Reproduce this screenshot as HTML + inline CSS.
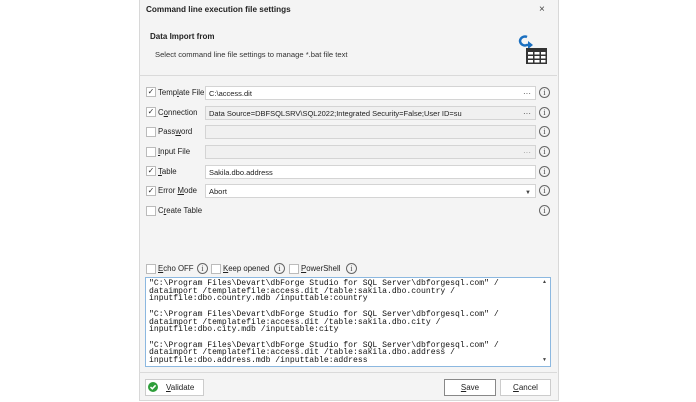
<!DOCTYPE html><html><head><style>
body{margin:0;width:696px;height:402px;background:#fff;position:relative;font-family:"Liberation Sans",sans-serif;font-size:8px;color:#222;overflow:hidden}
.a{position:absolute}
.dlg{left:139px;top:0;width:418px;height:400px;background:#f4f4f4;border:1px solid #d8d8d8;border-top:none}
.cb{position:absolute;width:8px;height:8px;border:1px solid #bbb;background:#fff;font-size:8px;line-height:8px;text-align:center;color:#333}
.lb{position:absolute;font-size:7.8px;line-height:10px}
.in{position:absolute;left:205px;width:331px;height:14px;border:1px solid #d4d4d4;background:#fff;font-size:7.5px;line-height:14px;padding-left:3px;box-sizing:border-box}
.dis{background:#f0f0f0}
.info{position:absolute;left:539px;width:9px;height:9px;border:1px solid #666;border-radius:50%;font-size:8px;line-height:9px;text-align:center;color:#444;font-family:"Liberation Serif",serif}
.dots{position:absolute;right:4px;top:0;font-size:8px;color:#444}
.ta{left:145px;top:277px;width:406px;height:90px;border:1px solid #8cb8e0;background:#fff;box-sizing:border-box;font-family:"Liberation Mono",monospace;font-size:8.1px;line-height:7.7px;padding:2px 0 0 3px;white-space:pre;color:#111}
.btn{position:absolute;height:17px;border:1px solid #ccc;background:#fff;box-sizing:border-box;font-size:8px;line-height:15px;text-align:center}
u{text-decoration:underline}
</style></head><body>
<div class="a dlg"></div>
<div class="a" style="left:146px;top:5px;font-weight:bold;font-size:8.2px">Command line execution file settings</div>
<div class="a" style="left:539px;top:4px;font-size:10px;color:#444">×</div>
<div class="a" style="left:150px;top:32px;font-weight:bold;font-size:8px">Data Import from</div>
<div class="a" style="left:155px;top:50px;font-size:7.6px;color:#333">Select command line file settings to manage *.bat file text</div>
<svg class="a" style="left:515px;top:34px" width="34" height="32" viewBox="0 0 34 32">
<path d="M12 3 A5 5 0 0 0 5 7 A5 5 0 0 0 12 11 L15 11" fill="none" stroke="#1a6fc0" stroke-width="2.5"/>
<path d="M13 7 L18 11 L13 15Z" fill="#1a6fc0"/>
<rect x="11" y="14" width="21" height="16" fill="#333"/>
<g fill="#fff"><rect x="13" y="18" width="5" height="2.5"/><rect x="19.5" y="18" width="5" height="2.5"/><rect x="26" y="18" width="4.5" height="2.5"/>
<rect x="13" y="22" width="5" height="2.5"/><rect x="19.5" y="22" width="5" height="2.5"/><rect x="26" y="22" width="4.5" height="2.5"/>
<rect x="13" y="26" width="5" height="2.5"/><rect x="19.5" y="26" width="5" height="2.5"/><rect x="26" y="26" width="4.5" height="2.5"/></g></svg>
<div class="a" style="left:139px;top:75px;width:418px;height:1px;background:#dadada"></div>

<div class="cb" style="left:146px;top:87px">✓</div><div class="lb" style="left:158px;top:88px">Temp<u>l</u>ate File</div>
<div class="in" style="top:86px">C:\access.dit<span class="dots">···</span></div><div class="info" style="top:87px">i</div>

<div class="cb" style="left:146px;top:107px">✓</div><div class="lb" style="left:158px;top:108px">C<u>o</u>nnection</div>
<div class="in dis" style="top:106px">Data Source=DBFSQLSRV\SQL2022;Integrated Security=False;User ID=su<span class="dots">···</span></div><div class="info" style="top:107px">i</div>

<div class="cb" style="left:146px;top:127px"></div><div class="lb" style="left:158px;top:127px">Pass<u>w</u>ord</div>
<div class="in dis" style="top:125px"></div><div class="info" style="top:126px">i</div>

<div class="cb" style="left:146px;top:147px"></div><div class="lb" style="left:158px;top:147px"><u>I</u>nput File</div>
<div class="in dis" style="top:145px"><span class="dots" style="color:#999">···</span></div><div class="info" style="top:146px">i</div>

<div class="cb" style="left:146px;top:166px">✓</div><div class="lb" style="left:158px;top:167px"><u>T</u>able</div>
<div class="in" style="top:165px">Sakila.dbo.address</div><div class="info" style="top:166px">i</div>

<div class="cb" style="left:146px;top:186px">✓</div><div class="lb" style="left:158px;top:186px">Error <u>M</u>ode</div>
<div class="in" style="top:184px">Abort<span class="dots" style="font-size:6px;top:1px">▼</span></div><div class="info" style="top:185px">i</div>

<div class="cb" style="left:146px;top:206px"></div><div class="lb" style="left:158px;top:206px">C<u>r</u>eate Table</div>
<div class="info" style="top:205px">i</div>

<div class="cb" style="left:146px;top:264px"></div><div class="lb" style="left:158px;top:264px"><u>E</u>cho OFF</div><div class="info" style="left:197px;top:263px">i</div>
<div class="cb" style="left:211px;top:264px"></div><div class="lb" style="left:223px;top:264px"><u>K</u>eep opened</div><div class="info" style="left:274px;top:263px">i</div>
<div class="cb" style="left:289px;top:264px"></div><div class="lb" style="left:301px;top:264px"><u>P</u>owerShell</div><div class="info" style="left:346px;top:263px">i</div>

<div class="a ta">"C:\Program Files\Devart\dbForge Studio for SQL Server\dbforgesql.com" /
dataimport /templatefile:access.dit /table:sakila.dbo.country /
inputfile:dbo.country.mdb /inputtable:country

"C:\Program Files\Devart\dbForge Studio for SQL Server\dbforgesql.com" /
dataimport /templatefile:access.dit /table:sakila.dbo.city /
inputfile:dbo.city.mdb /inputtable:city

"C:\Program Files\Devart\dbForge Studio for SQL Server\dbforgesql.com" /
dataimport /templatefile:access.dit /table:sakila.dbo.address /
inputfile:dbo.address.mdb /inputtable:address</div>
<div class="a" style="left:542px;top:279px;font-size:5px;color:#444">▲</div>
<div class="a" style="left:542px;top:357px;font-size:5px;color:#444">▼</div>

<div class="a" style="left:139px;top:372px;width:418px;height:1px;background:#dadada"></div>
<div class="btn" style="left:145px;top:379px;width:59px;text-align:left;padding-left:20px"><u>V</u>alidate</div>
<svg class="a" style="left:148px;top:382px" width="10" height="10"><circle cx="5" cy="5" r="5" fill="#2e9e3a"/><path d="M2.5 5 L4.3 6.8 L7.6 3.3" stroke="#fff" stroke-width="1.5" fill="none"/></svg>
<div class="btn" style="left:444px;top:379px;width:52px;border-color:#888"><u>S</u>ave</div>
<div class="btn" style="left:500px;top:379px;width:51px"><u>C</u>ancel</div>
</body></html>
